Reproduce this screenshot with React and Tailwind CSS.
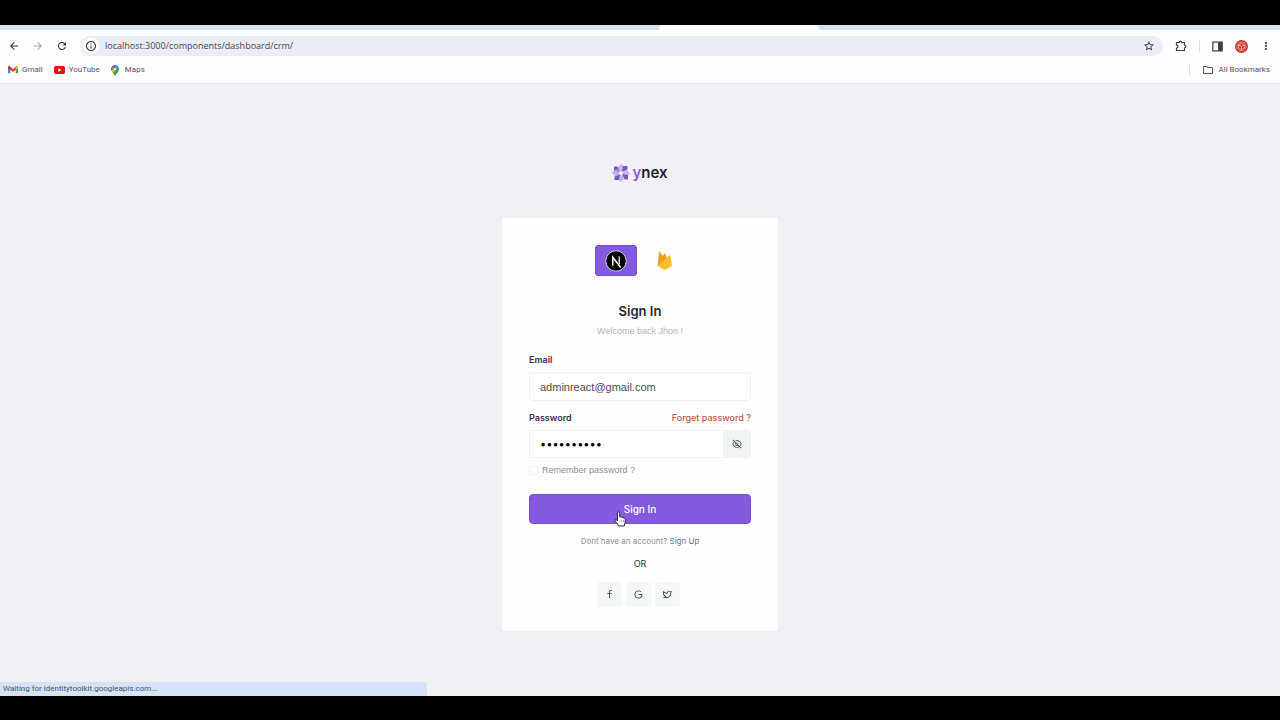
import React from "react";
import { RiFacebookLine, RiGoogleLine, RiTwitterLine, RiEyeOffLine } from "react-icons/ri";
import {
  MdArrowBack,
  MdArrowForward,
  MdRefresh,
  MdInfoOutline,
  MdStarBorder,
  MdMoreVert,
  MdOutlineFolder,
} from "react-icons/md";

function GmailIcon() {
  return (
    <svg viewBox="0 0 20 16" className="h-2 w-2.5" aria-hidden="true">
      <path d="M0 3v11.5h4.5V6z" fill="#4285f4" />
      <path d="M20 3v11.5h-4.500V6z" fill="#34a853" />
      <path d="M0 3C0 .5 2.500 0 4 1.200l6 4.600 6-4.600C17.500 0 20 .5 20 3v1.500l-10 7.500L0 4.500z" fill="#ea4335" />
      <path d="M0 2.500C0 1 1.500 0 3 .6L4.500 1.600v6.300L0 4.500z" fill="#c5221f" />
      <path d="M20 2.500C20 1 18.500 0 17 .6l-1.500 1v6.300L20 4.500z" fill="#fbbc04" />
    </svg>
  );
}

function YouTubeIcon() {
  return (
    <svg viewBox="0 0 22 16" className="h-2 w-[11px]" aria-hidden="true">
      <rect width="22" height="16" rx="4" fill="#e60f0f" />
      <path d="M8.500 4.500v7l6.500-3.500z" fill="#fff" />
    </svg>
  );
}

function MapsIcon() {
  return (
    <svg viewBox="0 0 16 22" className="h-[11px] w-2" aria-hidden="true">
      <path d="M8 0a8 8 0 0 0-6.200 3L6 6.500 11 .6A8 8 0 0 0 8 0z" fill="#1a73e8" />
      <path d="M1.800 3A8 8 0 0 0 .7 11.300L6 6.500z" fill="#ea4335" />
      <path d="M11 .6 6 6.500a3 3 0 0 1 4.400 4L15.300 4.700A8 8 0 0 0 11 .6z" fill="#4285f4" />
      <path d="M6 6.500.7 11.300C1.300 12.600 2.500 14 3.600 15.400l6.800-4.900A3 3 0 0 1 6 6.500z" fill="#fbbc04" />
      <path d="M15.300 4.700 3.600 15.400C5.500 18 6.700 19.500 7.200 21.400c.3.800 1.300.8 1.600 0C10 17.500 16 14 16 8a8 8 0 0 0-.7-3.300z" fill="#34a853" />
    </svg>
  );
}

function ExtensionIcon() {
  return (
    <svg viewBox="0 0 24 24" className="size-3" aria-hidden="true">
      <path
        d="M3 5h5.500a2.500 2.500 0 0 1 5 0H19v5.500a2.500 2.500 0 0 1 0 5V21H3v-5a3 3 0 0 0 0-6z"
        fill="none"
        stroke="#3c4043"
        strokeWidth="2.400"
        strokeLinejoin="round"
      />
    </svg>
  );
}

function SidePanelIcon() {
  return (
    <svg viewBox="0 0 20 20" className="size-[11px]" aria-hidden="true">
      <rect x="1.500" y="2" width="17" height="16" fill="none" stroke="#3c4043" strokeWidth="2.200" />
      <path d="M11 2h7.500v16H11z" fill="#3c4043" />
    </svg>
  );
}

function ProfileIcon() {
  return (
    <svg viewBox="0 0 26 26" className="size-[13px]" aria-hidden="true">
      <circle cx="13" cy="13" r="13" fill="#c8302c" />
      <circle cx="13" cy="13" r="9" fill="none" stroke="#f0a5a0" strokeWidth="1.500" />
      <path d="m13 6.500 5.600 3.200v6.600L13 19.500l-5.600-3.200V9.700zM7.400 9.700l5.600 3.300 5.600-3.300M13 13v6.500" fill="none" stroke="#f7c4c0" strokeWidth="1.600" />
    </svg>
  );
}

function LogoMark() {
  const angles = [0, 90, 180, 270];
  return (
    <svg viewBox="0 0 36 36" className="size-[18px]" aria-hidden="true">
      {angles.map((a) => (
        <g key={a} transform={`rotate(${a} 18 18)`}>
          <path d="M15 14 12 6l7-6 5 6-6 8z" fill="#c3b1f0" />
          <path d="m18 14 6-8 2 4-5 5z" fill="#a78de6" />
          <path d="M15.500 15.500 4 14V5h7z" fill="#7558bb" />
        </g>
      ))}
      <circle cx="18" cy="18" r="2.500" fill="#f0f0f5" />
    </svg>
  );
}

function NextIcon() {
  return (
    <svg viewBox="0 0 44 44" className="size-[22px]" aria-hidden="true">
      <circle cx="22" cy="22" r="20.500" fill="#000" stroke="#d6c9f3" strokeWidth="2" />
      <path d="M15.500 31V14.500L31.500 35" fill="none" stroke="#fff" strokeWidth="3" />
      <path d="M28.500 13v15" fill="none" stroke="#ddd" strokeWidth="2.800" />
    </svg>
  );
}

function FirebaseIcon() {
  return (
    <svg viewBox="0 0 30 38" className="h-[19px] w-[15px]" aria-hidden="true">
      <path d="M1 30 4 2c.2-1.200 1.500-1.300 2-.4l6 9z" fill="#f0a21c" />
      <path d="M1 30 14 5.500c.5-.8 1.500-.8 2 0L28 30z" fill="#f39a1c" />
      <path d="M1 30 24.500 9c.8-.8 2-.3 2.200.7L30 30l-12.500 7.200c-1.200.7-2.600.7-3.800 0z" fill="#fcc02e" />
    </svg>
  );
}

function HandPointer() {
  return (
    <svg viewBox="0 0 24 32" className="pointer-events-none absolute top-[17px] left-[85px] h-4 w-3" aria-hidden="true">
      <path
        d="M7 20V4c0-3.500 4.500-3.500 4.500 0v8c1-1 3.500-.8 4 1 1.200-1 3.300-.5 3.500 1.200 1.500-.8 3.500 0 3.500 2V22c0 3-2 4.500-2 8H9c-1-4-4-6-6.500-10-1.500-2.500 1-4 2.700-2.300z"
        fill="#fff"
        stroke="#29253a"
        strokeWidth="2"
        strokeLinejoin="round"
      />
      <path d="M12 18v5M15.500 18v5M19 18v5" stroke="#77737f" strokeWidth="1" />
    </svg>
  );
}

function BrowserChrome() {
  return (
    <header className="border-b border-[#e3e5e9] bg-[#fdfdfe]">
      <div className="flex h-[5px] bg-[#d5e1f5]">
        <div className="ml-[51.500%] w-[12.500%] rounded-t-sm bg-white" />
      </div>
      <div className="flex h-8 items-center px-2 text-[#303338]">
        <button type="button" aria-label="Back" className="mr-3"><MdArrowBack className="size-3" /></button>
        <button type="button" aria-label="Forward" className="mr-3 text-[#a3a6aa]"><MdArrowForward className="size-3" /></button>
        <button type="button" aria-label="Reload" className="mr-3"><MdRefresh className="size-3" /></button>
        <div className="mr-3 flex h-5 flex-1 items-center rounded-full bg-[#eaeef4] pr-2 pl-[3px]">
          <button type="button" aria-label="Site information" className="flex size-4 items-center justify-center rounded-full bg-white">
            <MdInfoOutline className="size-3" />
          </button>
          <input
            type="text"
            aria-label="Address"
            defaultValue="localhost:3000/components/dashboard/crm/"
            className="ml-1.5 min-w-0 flex-1 bg-transparent font-['Open_Sans','Noto_Sans',sans-serif] text-[9px] leading-3 text-[#45494f] outline-none"
          />
          <button type="button" aria-label="Bookmark this page"><MdStarBorder className="size-3" /></button>
        </div>
        <div className="flex items-center">
          <button type="button" aria-label="Extensions" className="mr-3"><ExtensionIcon /></button>
          <span className="mr-3 h-3 w-px bg-[#dcdfe5]" />
          <button type="button" aria-label="Side panel" className="mr-3"><SidePanelIcon /></button>
          <button type="button" aria-label="Profile" className="mr-3"><ProfileIcon /></button>
          <button type="button" aria-label="Menu"><MdMoreVert className="size-3" /></button>
        </div>
      </div>
      <nav aria-label="Bookmarks" className="flex h-[21px] items-start justify-between px-2 pt-0.5 font-['Roboto',sans-serif] text-[8px] leading-3 text-[#55585d]">
        <div className="flex items-center gap-[11px]">
          <a href="#gmail" className="flex items-center gap-1"><GmailIcon />Gmail</a>
          <a href="#youtube" className="flex items-center gap-1"><YouTubeIcon />YouTube</a>
          <a href="#maps" className="flex items-center gap-1.5"><MapsIcon />Maps</a>
        </div>
        <div className="flex items-center">
          <span className="mr-3 h-2.5 w-px bg-[#dcdfe5]" />
          <button type="button" className="flex items-center gap-1 pr-0.5"><MdOutlineFolder className="size-3" />All Bookmarks</button>
        </div>
      </nav>
    </header>
  );
}

function SignInCard() {
  const social = "flex size-[25px] items-center justify-center rounded-xs bg-[#f5f8f9] text-[#42464c]";
  return (
    <form
      onSubmit={(e) => e.preventDefault()}
      className="mt-[35px] flex w-[276px] flex-col rounded-xs bg-[#fefefe] px-[27px] pt-[27px] pb-6 text-[9px] leading-3 text-[#34363b]"
    >
      <div className="flex justify-center gap-1.5">
        <button type="button" aria-label="Next.js" className="flex h-[31px] w-[42px] items-center justify-center rounded-[3px] border border-[#7750cd] bg-[#845adf]">
          <NextIcon />
        </button>
        <button type="button" aria-label="Firebase" className="flex h-[31px] w-[42px] items-center justify-center">
          <FirebaseIcon />
        </button>
      </div>
      <h1 className="mt-[25px] text-center text-[13px] leading-5 font-semibold text-[#25272c]">Sign In</h1>
      <p className="mt-1 text-center font-['Liberation_Sans',sans-serif] text-[#b3b5b9]">Welcome back Jhon !</p>

      <label htmlFor="email" className="mt-[17px] font-semibold">Email</label>
      <input
        id="email"
        type="email"
        defaultValue="adminreact@gmail.com"
        className="mt-1.5 h-[29px] w-full rounded-[3px] border border-[#f0f1f3] bg-white px-2.5 font-['Liberation_Sans',sans-serif] text-[11px] text-[#4a4c51] outline-none"
      />

      <div className="mt-[11px] flex justify-between">
        <label htmlFor="password" className="font-semibold">Password</label>
        <a href="#forget" className="font-medium text-[#bd5650]">Forget password ?</a>
      </div>
      <div className="mt-1.5 flex h-7">
        <input
          id="password"
          type="password"
          defaultValue="adminreact"
          className="min-w-0 flex-1 rounded-l-[3px] border border-r-0 border-[#f0f1f3] bg-white px-2.5 text-[11px] text-black outline-none"
        />
        <button type="button" aria-label="Show password" className="flex w-7 items-center justify-center rounded-r-[3px] bg-[#eff4f5] text-[#45494f]">
          <RiEyeOffLine className="size-2.5" />
        </button>
      </div>
      <div className="mt-1.5 flex items-center gap-1">
        <input
          id="remember"
          type="checkbox"
          className="size-[9px] appearance-none rounded-xs border border-[#f0f1f3] bg-white checked:bg-[#845adf]"
        />
        <label htmlFor="remember" className="font-['Liberation_Sans',sans-serif] text-[#8c8f95]">Remember password ?</label>
      </div>

      <div className="relative mt-[18px]">
        <button type="submit" className="block h-[30px] w-full rounded-[4px] border border-[#7750cd] bg-[#845adf] text-[10px] font-medium text-white">
          Sign In
        </button>
        <HandPointer />
      </div>

      <p className="mt-[11px] text-center text-[8px] text-[#8c8f9b]">
        Dont have an account? <a href="#sign-up" className="text-[#737092]">Sign Up</a>
      </p>
      <p className="mt-[11px] text-center">OR</p>
      <div className="mt-3 flex justify-center gap-1 pr-1">
        <button type="button" aria-label="Facebook" className={social}><RiFacebookLine className="size-[11px]" /></button>
        <button type="button" aria-label="Google" className={social}><RiGoogleLine className="size-[11px]" /></button>
        <button type="button" aria-label="Twitter" className={social}><RiTwitterLine className="size-[11px]" /></button>
      </div>
    </form>
  );
}

export default function App() {
  return (
    <div className="flex min-h-screen flex-col bg-black pt-[25px] pb-6">
      <BrowserChrome />
      <div className="relative flex flex-1 flex-col bg-[#f0f0f5]">
        <main className="flex flex-1 flex-col items-center pt-[79px] pb-12 font-['Inter',sans-serif]">
          <a href="#home" className="flex h-5 items-center gap-0.5 text-[15px] leading-5 font-semibold text-[#1d1c2c]">
            <LogoMark />
            <span><span className="text-[#8562d3]">y</span>nex</span>
          </a>
          <SignInCard />
        </main>
        <div
          role="status"
          className="absolute bottom-0 left-0 flex h-3.5 w-1/3 items-center rounded-tr-xs bg-[#d3e3f8] pl-[3px] font-['Roboto',sans-serif] text-[8px] leading-3 text-[#4b5666]"
        >
          Waiting for identitytoolkit.googleapis.com...
        </div>
      </div>
    </div>
  );
}
